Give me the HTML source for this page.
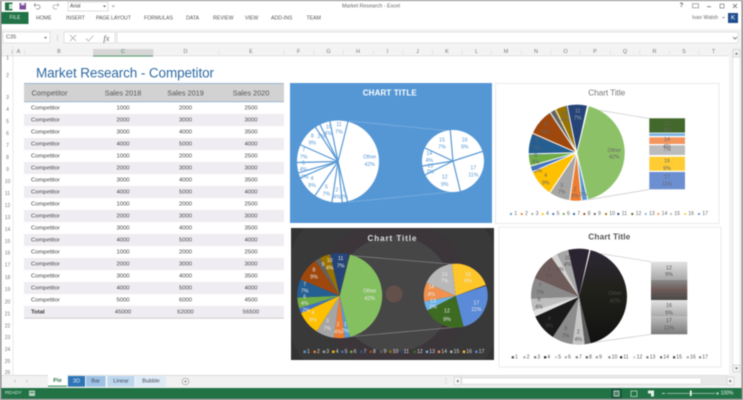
<!DOCTYPE html>
<html><head><meta charset="utf-8"><title>Market Research - Excel</title>
<style>
html,body{margin:0;padding:0;background:#fff;width:743px;height:400px;overflow:hidden}
svg{display:block;filter:blur(.42px)}
text{font-family:"Liberation Sans",sans-serif;dominant-baseline:central}
.m{text-anchor:middle}
.tab{font-size:5.2px;fill:#555}
.hd{font-size:5.5px;fill:#777;text-anchor:middle}
.rn{font-size:5px;fill:#777;text-anchor:middle}
.th{font-size:7.3px;fill:#555;text-anchor:middle}
.td{font-size:5.9px;fill:#444}
.n{text-anchor:middle}
.b text{font-size:5.3px;fill:#5597d5;text-anchor:middle}
.w text{font-size:5.3px;fill:#666;text-anchor:middle}
.d text{font-size:5.3px;fill:#e8e8e8;text-anchor:middle}
.g text{font-size:5.3px;fill:#555;text-anchor:middle}
.lg text{font-size:5.2px}
circle.s{fill:none}
</style></head><body>
<svg width="743" height="400" viewBox="0 0 743 400" xmlns="http://www.w3.org/2000/svg">
<rect width="743" height="400" fill="#fff"/>
<!-- window border -->
<rect x="0" y="0" width="743" height="1" fill="#8a8a8a"/>
<rect x="0" y="0" width="1.5" height="400" fill="#8a8a8a"/>
<rect x="741.5" y="0" width="1.5" height="400" fill="#8a8a8a"/>
<!-- quick access -->
<rect x="5" y="2.5" width="7.5" height="8" fill="#217346"/><rect x="9" y="4" width="3.5" height="5" fill="#cfe3d6"/>
<rect x="19.5" y="3" width="6.5" height="6.5" fill="#7a4f96"/><rect x="21" y="3" width="3.5" height="2.3" fill="#e7dcee"/>
<path d="M34 5h4a2 2 0 0 1 0 4h-2M34 5l1.6-1.6M34 5l1.6 1.6" fill="none" stroke="#8a8a8a" stroke-width=".8"/>
<path d="M59 5h-4a2 2 0 0 0 0 4h2M59 5l-1.6-1.6M59 5l-1.6 1.6" fill="none" stroke="#aaa" stroke-width=".8"/>
<rect x="68" y="2" width="40" height="9" fill="#fff" stroke="#c8c8c8" stroke-width=".6"/>
<text x="70" y="6.5" font-size="5.2" fill="#444">Arial</text>
<path d="M103 5.5h3l-1.5 2z" fill="#666"/>
<path d="M112 5l1.3 2 1.3-2" fill="none" stroke="#888" stroke-width=".6"/>
<text x="371" y="6.7" class="m" font-size="5.3" fill="#666" textLength="58">Market Research - Excel</text>
<!-- window controls -->
<text x="681.5" y="6" class="m" font-size="6" fill="#555" font-weight="bold">?</text>
<rect x="692.5" y="3.8" width="6" height="4" fill="none" stroke="#888" stroke-width=".7"/>
<rect x="707" y="6.3" width="4" height=".8" fill="#666"/>
<rect x="720" y="4" width="4" height="4" fill="none" stroke="#777" stroke-width=".7"/>
<path d="M733 4l4 4M737 4l-4 4" stroke="#666" stroke-width=".8"/>
<!-- ribbon tabs -->
<rect x="1.5" y="12" width="27" height="12" fill="#217346"/>
<text x="15" y="18" class="m" font-size="5.2" fill="#e6f2ea">FILE</text>
<text x="36" y="18.3" class="tab">HOME</text>
<text x="66" y="18.3" class="tab">INSERT</text>
<text x="96" y="18.3" class="tab" textLength="35">PAGE LAYOUT</text>
<text x="144" y="18.3" class="tab" textLength="29">FORMULAS</text>
<text x="186" y="18.3" class="tab">DATA</text>
<text x="213" y="18.3" class="tab">REVIEW</text>
<text x="245" y="18.3" class="tab">VIEW</text>
<text x="271" y="18.3" class="tab">ADD-INS</text>
<text x="306.5" y="18.3" class="tab">TEAM</text>
<text x="692" y="18" font-size="5.2" fill="#666" textLength="26">Ivan Walsh</text>
<path d="M722 17h3l-1.5 1.5z" fill="#888"/>
<rect x="728" y="13" width="10" height="10" fill="#1f4e8c"/>
<text x="733" y="18" class="m" font-size="6.5" fill="#fff">K</text>
<!-- formula bar -->
<rect x="1.5" y="29" width="740" height="17" fill="#f4f4f4"/>
<rect x="3" y="32" width="47" height="11" fill="#fff" stroke="#d8d8d8" stroke-width=".7"/>
<text x="6" y="37.7" font-size="5.6" fill="#555">C35</text>
<path d="M44 37h3l-1.5 1.7z" fill="#666"/>
<circle cx="57.5" cy="36" r=".5" fill="#aaa"/><circle cx="57.5" cy="38" r=".5" fill="#aaa"/><circle cx="57.5" cy="40" r=".5" fill="#aaa"/>
<rect x="64" y="32" width="51" height="11" fill="#fff" stroke="#d8d8d8" stroke-width=".7"/>
<path d="M70 35l6 6M76 35l-6 6" stroke="#bbb" stroke-width=".9"/>
<path d="M86 38.5l2.5 2.5 5-5.5" fill="none" stroke="#bbb" stroke-width=".9"/>
<text x="106.5" y="38" class="m" font-size="8.5" fill="#666" font-style="italic" style="font-family:'Liberation Serif',serif">fx</text>
<rect x="117" y="32" width="621" height="11" fill="#fff" stroke="#d8d8d8" stroke-width=".7"/>
<path d="M734 37l2 2 2-2" fill="none" stroke="#666" stroke-width=".8" transform="translate(-1,0)"/>
<!-- col headers -->
<rect x="1.5" y="46" width="740" height="10" fill="#f3f3f3"/>
<rect x="1.5" y="55.6" width="727" height=".6" fill="#d4d4d4"/>
<rect x="93" y="49" width="60" height="7" fill="#d6d6d6"/>
<rect x="93" y="55.5" width="60" height="1.1" fill="#5c9a76"/>
<path d="M13 49l-2 3 2 3z" fill="#ccc"/>
<g fill="#dcdcdc">
<rect x="24.5" y="50" width=".6" height="5"/><rect x="93" y="50" width=".6" height="5"/><rect x="153" y="50" width=".6" height="5"/><rect x="218.5" y="50" width=".6" height="5"/><rect x="284" y="50" width=".6" height="5"/><rect x="313.5" y="50" width=".6" height="5"/><rect x="343" y="50" width=".6" height="5"/><rect x="373" y="50" width=".6" height="5"/><rect x="402.5" y="50" width=".6" height="5"/><rect x="432" y="50" width=".6" height="5"/><rect x="461.5" y="50" width=".6" height="5"/><rect x="491" y="50" width=".6" height="5"/><rect x="521" y="50" width=".6" height="5"/><rect x="550.5" y="50" width=".6" height="5"/><rect x="580" y="50" width=".6" height="5"/><rect x="610" y="50" width=".6" height="5"/><rect x="639.5" y="50" width=".6" height="5"/><rect x="669" y="50" width=".6" height="5"/><rect x="698.5" y="50" width=".6" height="5"/>
</g>
<text x="18.5" y="52" class="hd">A</text><text x="59" y="52" class="hd">B</text><text x="123" y="52" class="hd" style="fill:#3d8058">C</text><text x="185.5" y="52" class="hd">D</text><text x="251" y="52" class="hd">E</text><text x="298.5" y="52" class="hd">F</text><text x="328.5" y="52" class="hd">G</text><text x="358" y="52" class="hd">H</text><text x="387.5" y="52" class="hd">I</text><text x="417.5" y="52" class="hd">J</text><text x="447" y="52" class="hd">K</text><text x="476.5" y="52" class="hd">L</text><text x="506" y="52" class="hd">M</text><text x="536" y="52" class="hd">N</text><text x="565.5" y="52" class="hd">O</text><text x="595" y="52" class="hd">P</text><text x="625" y="52" class="hd">Q</text><text x="654.5" y="52" class="hd">R</text><text x="684" y="52" class="hd">S</text><text x="713.5" y="52" class="hd">T</text>
<!-- row header -->
<rect x="12.6" y="46" width=".6" height="329" fill="#dcdcdc"/>
<text x="7.5" y="58.5" class="rn">1</text><text x="7.5" y="76" class="rn">2</text><text x="7.5" y="98" class="rn">3</text><text x="7.5" y="110" class="rn">4</text><text x="7.5" y="122" class="rn">5</text><text x="7.5" y="134" class="rn">6</text><text x="7.5" y="146" class="rn">7</text><text x="7.5" y="158" class="rn">8</text><text x="7.5" y="170" class="rn">9</text><text x="7.5" y="182" class="rn">10</text><text x="7.5" y="194" class="rn">11</text><text x="7.5" y="206" class="rn">12</text><text x="7.5" y="218" class="rn">13</text><text x="7.5" y="230" class="rn">14</text><text x="7.5" y="242" class="rn">15</text><text x="7.5" y="253.7" class="rn">16</text><text x="7.5" y="265.7" class="rn">17</text><text x="7.5" y="278" class="rn">18</text><text x="7.5" y="290" class="rn">19</text><text x="7.5" y="302.5" class="rn">20</text><text x="7.5" y="314.5" class="rn">21</text><text x="7.5" y="326.5" class="rn">22</text><text x="7.5" y="338" class="rn">23</text><text x="7.5" y="350" class="rn">24</text><text x="7.5" y="362" class="rn">25</text><text x="7.5" y="373" class="rn">26</text>
<!-- title -->
<text x="36" y="73" font-size="13.5" fill="#2f6aa3" textLength="178">Market Research - Competitor</text>
<!-- table -->
<rect x="24" y="83.3" width="260" height="18.4" fill="#d2d2d2"/>
<rect x="24" y="83" width="260" height=".8" fill="#8fb0d0"/><rect x="24" y="101.4" width="260" height=".8" fill="#8fb0d0"/>
<text x="31.5" y="93" font-size="7.3" fill="#555" textLength="36">Competitor</text>
<text x="123" y="93" class="th">Sales 2018</text><text x="185.5" y="93" class="th">Sales 2019</text><text x="251" y="93" class="th">Sales 2020</text>
<g fill="#f0edf2">
<rect x="24" y="114" width="260" height="12"/><rect x="24" y="138" width="260" height="12"/><rect x="24" y="162" width="260" height="12"/><rect x="24" y="186" width="260" height="12"/><rect x="24" y="210" width="260" height="12"/><rect x="24" y="234" width="260" height="12"/><rect x="24" y="258" width="260" height="12"/><rect x="24" y="282" width="260" height="12"/><rect x="24" y="306" width="260" height="12"/>
</g>
<rect x="24" y="317.8" width="260" height=".8" fill="#c4c4c4"/>
<g class="td" transform="translate(0,.6)">
<text class="td" x="31" y="107.7">Competitor</text><text class="td n" x="123" y="107.7">1000</text><text class="td n" x="185.5" y="107.7">2000</text><text class="td n" x="251" y="107.7">2500</text>
<text class="td" x="31" y="119.7">Competitor</text><text class="td n" x="123" y="119.7">2000</text><text class="td n" x="185.5" y="119.7">3000</text><text class="td n" x="251" y="119.7">3000</text>
<text class="td" x="31" y="131.7">Competitor</text><text class="td n" x="123" y="131.7">3000</text><text class="td n" x="185.5" y="131.7">4000</text><text class="td n" x="251" y="131.7">3500</text>
<text class="td" x="31" y="143.7">Competitor</text><text class="td n" x="123" y="143.7">4000</text><text class="td n" x="185.5" y="143.7">5000</text><text class="td n" x="251" y="143.7">4000</text>
<text class="td" x="31" y="155.7">Competitor</text><text class="td n" x="123" y="155.7">1000</text><text class="td n" x="185.5" y="155.7">2000</text><text class="td n" x="251" y="155.7">2500</text>
<text class="td" x="31" y="167.7">Competitor</text><text class="td n" x="123" y="167.7">2000</text><text class="td n" x="185.5" y="167.7">3000</text><text class="td n" x="251" y="167.7">3000</text>
<text class="td" x="31" y="179.7">Competitor</text><text class="td n" x="123" y="179.7">3000</text><text class="td n" x="185.5" y="179.7">4000</text><text class="td n" x="251" y="179.7">3500</text>
<text class="td" x="31" y="191.7">Competitor</text><text class="td n" x="123" y="191.7">4000</text><text class="td n" x="185.5" y="191.7">5000</text><text class="td n" x="251" y="191.7">4000</text>
<text class="td" x="31" y="203.7">Competitor</text><text class="td n" x="123" y="203.7">1000</text><text class="td n" x="185.5" y="203.7">2000</text><text class="td n" x="251" y="203.7">2500</text>
<text class="td" x="31" y="215.7">Competitor</text><text class="td n" x="123" y="215.7">2000</text><text class="td n" x="185.5" y="215.7">3000</text><text class="td n" x="251" y="215.7">3000</text>
<text class="td" x="31" y="227.7">Competitor</text><text class="td n" x="123" y="227.7">3000</text><text class="td n" x="185.5" y="227.7">4000</text><text class="td n" x="251" y="227.7">3500</text>
<text class="td" x="31" y="239.7">Competitor</text><text class="td n" x="123" y="239.7">4000</text><text class="td n" x="185.5" y="239.7">5000</text><text class="td n" x="251" y="239.7">4000</text>
<text class="td" x="31" y="251.7">Competitor</text><text class="td n" x="123" y="251.7">1000</text><text class="td n" x="185.5" y="251.7">2000</text><text class="td n" x="251" y="251.7">2500</text>
<text class="td" x="31" y="263.7">Competitor</text><text class="td n" x="123" y="263.7">2000</text><text class="td n" x="185.5" y="263.7">3000</text><text class="td n" x="251" y="263.7">3000</text>
<text class="td" x="31" y="275.7">Competitor</text><text class="td n" x="123" y="275.7">3000</text><text class="td n" x="185.5" y="275.7">4000</text><text class="td n" x="251" y="275.7">3500</text>
<text class="td" x="31" y="287.7">Competitor</text><text class="td n" x="123" y="287.7">4000</text><text class="td n" x="185.5" y="287.7">5000</text><text class="td n" x="251" y="287.7">4000</text>
<text class="td" x="31" y="299.7">Competitor</text><text class="td n" x="123" y="299.7">5000</text><text class="td n" x="185.5" y="299.7">6000</text><text class="td n" x="251" y="299.7">4500</text>
<text class="td" x="31" y="311.7" font-weight="bold" style="fill:#333">Total</text><text class="td n" x="123" y="311.7">45000</text><text class="td n" x="185.5" y="311.7">62000</text><text class="td n" x="251" y="311.7">56500</text>
</g>

<!-- CHART 1 blue -->
<rect x="290" y="83" width="202" height="140" fill="#5597d5"/>
<text x="389.7" y="93" class="m" font-size="8" font-weight="bold" fill="#fff" textLength="54">CHART TITLE</text>
<path d="M349 121L451 131M349 202L461 191" stroke="#a9cbea" stroke-width=".6" stroke-dasharray="1.5 1"/>
<circle cx="338" cy="161.5" r="41" fill="#fff"/>
<circle cx="453" cy="161" r="31" fill="#fff"/>
<g stroke="#5597d5" stroke-width="1.2">
<g transform="translate(338,161.5)"><line y2="-41.5" transform="rotate(14)"/><line y2="-41.5" transform="rotate(166.7)"/><line y2="-41.5" transform="rotate(174)"/><line y2="-41.5" transform="rotate(188.5)"/><line y2="-41.5" transform="rotate(214)"/><line y2="-41.5" transform="rotate(246.7)"/><line y2="-41.5" transform="rotate(254)"/><line y2="-41.5" transform="rotate(268.6)"/><line y2="-41.5" transform="rotate(294)"/><line y2="-41.5" transform="rotate(326.7)"/><line y2="-41.5" transform="rotate(334)"/><line y2="-41.5" transform="rotate(348.6)"/></g>
<g transform="translate(453,161)"><line y2="-31.5" transform="rotate(72)"/><line y2="-31.5" transform="rotate(166.3)"/><line y2="-31.5" transform="rotate(243.4)"/><line y2="-31.5" transform="rotate(260.6)"/><line y2="-31.5" transform="rotate(294.9)"/><line y2="-31.5" transform="rotate(354.9)"/></g>
</g>
<g class="b">
<text x="369.7" y="157.7">Other</text><text x="369.7" y="165">42%</text>
<text x="339" y="125">11</text><text x="339" y="132.3">7%</text>
<text x="328.7" y="127.7">10</text><text x="328" y="134">4%</text>
<text x="321.3" y="137">2%</text>
<text x="312.3" y="136.7">8</text><text x="312.3" y="143.3">9%</text>
<text x="303.7" y="150.7">7</text><text x="303.7" y="157.3">7%</text>
<text x="303.3" y="163.3">6</text><text x="303.3" y="170">4%</text>
<text x="304.7" y="177.3">2%</text>
<text x="312" y="179">4</text><text x="312" y="186">9%</text>
<text x="326.3" y="187.7">5</text><text x="326.3" y="194.3">7%</text>
<text x="337" y="190.7">2</text><text x="337" y="197.3">4%</text>
<text x="344" y="190">1</text><text x="344" y="197.3">2%</text>
<text x="464.7" y="140.7">16</text><text x="464.7" y="147.3">9%</text>
<text x="442" y="140.7">15</text><text x="442" y="147.3">7%</text>
<text x="429.3" y="154">14</text><text x="429.3" y="161">4%</text>
<text x="430.3" y="166.7">13</text><text x="430.3" y="172.7">2%</text>
<text x="444.7" y="177.7">12</text><text x="444.7" y="185">9%</text>
<text x="473.3" y="168.3">17</text><text x="473.3" y="175.7">11%</text>
</g>

<!-- CHART 2 white -->
<rect x="495.5" y="83.5" width="223.5" height="140" fill="#fff" stroke="#e6e6e6" stroke-width=".8"/>
<text x="606.7" y="92.7" class="m" font-size="8.3" fill="#777" textLength="37">Chart Title</text>
<path d="M588.5 108.5L649.3 118.5M587 200L649.3 189.5" stroke="#c8c8c8" stroke-width=".7"/>
<g transform="translate(576.7,152.7) rotate(-76)" stroke-width="48">
<circle class="s" r="24" pathLength="99" stroke="#8cc168" stroke-dasharray="42 99" stroke-dashoffset="0"/>
<circle class="s" r="24" pathLength="99" stroke="#5b9bd5" stroke-dasharray="2 99" stroke-dashoffset="-42"/>
<circle class="s" r="24" pathLength="99" stroke="#ed7d31" stroke-dasharray="4 99" stroke-dashoffset="-44"/>
<circle class="s" r="24" pathLength="99" stroke="#a5a5a5" stroke-dasharray="7 99" stroke-dashoffset="-48"/>
<circle class="s" r="24" pathLength="99" stroke="#ffc000" stroke-dasharray="9 99" stroke-dashoffset="-55"/>
<circle class="s" r="24" pathLength="99" stroke="#4472c4" stroke-dasharray="2 99" stroke-dashoffset="-64"/>
<circle class="s" r="24" pathLength="99" stroke="#70ad47" stroke-dasharray="4 99" stroke-dashoffset="-66"/>
<circle class="s" r="24" pathLength="99" stroke="#255e91" stroke-dasharray="7 99" stroke-dashoffset="-70"/>
<circle class="s" r="24" pathLength="99" stroke="#9e480e" stroke-dasharray="9 99" stroke-dashoffset="-77"/>
<circle class="s" r="24" pathLength="99" stroke="#636363" stroke-dasharray="2 99" stroke-dashoffset="-86"/>
<circle class="s" r="24" pathLength="99" stroke="#997300" stroke-dasharray="4 99" stroke-dashoffset="-88"/>
<circle class="s" r="24" pathLength="99" stroke="#264478" stroke-dasharray="7 99" stroke-dashoffset="-92"/>
</g>
<g stroke="#fff" stroke-width="1" transform="translate(576.7,152.7)"><line y2="-49" transform="rotate(14)"/><line y2="-49" transform="rotate(166.7)"/><line y2="-49" transform="rotate(174)"/><line y2="-49" transform="rotate(188.5)"/><line y2="-49" transform="rotate(214)"/><line y2="-49" transform="rotate(246.7)"/><line y2="-49" transform="rotate(254)"/><line y2="-49" transform="rotate(268.6)"/><line y2="-49" transform="rotate(294)"/><line y2="-49" transform="rotate(326.7)"/><line y2="-49" transform="rotate(334)"/><line y2="-49" transform="rotate(348.6)"/></g>
<rect x="649.3" y="118.3" width="35.7" height="14.3" fill="#43682b"/>
<rect x="649.3" y="133.3" width="35.7" height="2.7" fill="#7cb3e4"/>
<rect x="649.3" y="137.3" width="35.7" height="6.7" fill="#f4955e"/>
<rect x="649.3" y="145.3" width="35.7" height="9.7" fill="#bbb"/>
<rect x="649.3" y="156.7" width="35.7" height="14" fill="#ffcd33"/>
<rect x="649.3" y="172" width="35.7" height="17.3" fill="#6c8fd2"/>
<g class="w">
<text x="614.3" y="151">Other</text><text x="614.3" y="157.7">42%</text>
<text x="577.7" y="111.7" style="fill:#9aa">11</text><text x="577.7" y="118.7" style="fill:#9aa">7%</text>
<text x="564.3" y="114.3">10</text><text x="564.3" y="120.7">4%</text>
<text x="545.7" y="125">8</text><text x="545.7" y="132.3">9%</text>
<text x="536.7" y="141.7">7</text><text x="536.7" y="148.3">7%</text>
<text x="535.7" y="156">6</text><text x="535.7" y="162.7">4%</text>
<text x="538.3" y="171.7">2%</text>
<text x="545.7" y="176">4</text><text x="545.7" y="183.3">9%</text>
<text x="561.7" y="186">3</text><text x="561.7" y="192.7">7%</text>
<text x="575" y="190">2</text><text x="575" y="196.7">4%</text>
<text x="583.3" y="189.3">1</text><text x="583.3" y="195">2%</text>
<text x="667" y="124">12</text><text x="667" y="130.7">9%</text>
<text x="667" y="140">14</text><text x="667" y="147">4%</text>
<text x="667" y="150">7%</text>
<text x="667" y="161.7">16</text><text x="667" y="169">9%</text>
<text x="667" y="177.3">17</text><text x="667" y="184.3">11%</text>
</g>
<g class="lg" fill="#666">
<circle cx="511" cy="214" r="1.1" fill="#5b9bd5"/><text x="514.3" y="214">1</text>
<circle cx="521.7" cy="214" r="1.1" fill="#ed7d31"/><text x="525" y="214">2</text>
<circle cx="532.3" cy="214" r="1.1" fill="#a5a5a5"/><text x="535.6" y="214">3</text>
<circle cx="542.7" cy="214" r="1.1" fill="#ffc000"/><text x="546" y="214">4</text>
<circle cx="553.3" cy="214" r="1.1" fill="#4472c4"/><text x="556.6" y="214">5</text>
<circle cx="563.7" cy="214" r="1.1" fill="#70ad47"/><text x="567" y="214">6</text>
<circle cx="574" cy="214" r="1.1" fill="#255e91"/><text x="577.3" y="214">7</text>
<circle cx="584.3" cy="214" r="1.1" fill="#9e480e"/><text x="587.6" y="214">8</text>
<circle cx="594.7" cy="214" r="1.1" fill="#636363"/><text x="598" y="214">9</text>
<circle cx="606" cy="214" r="1.1" fill="#997300"/><text x="609.3" y="214">10</text>
<circle cx="618.3" cy="214" r="1.1" fill="#264478"/><text x="621.6" y="214">11</text>
<circle cx="632.3" cy="214" r="1.1" fill="#43682b"/><text x="635.6" y="214">12</text>
<circle cx="645.7" cy="214" r="1.1" fill="#7cb3e4"/><text x="649" y="214">13</text>
<circle cx="658.3" cy="214" r="1.1" fill="#f4955e"/><text x="661.6" y="214">14</text>
<circle cx="671" cy="214" r="1.1" fill="#bbb"/><text x="674.3" y="214">15</text>
<circle cx="685" cy="214" r="1.1" fill="#ffcd33"/><text x="688.3" y="214">16</text>
<circle cx="699" cy="214" r="1.1" fill="#6c8fd2"/><text x="702.3" y="214">17</text>
</g>

<!-- CHART 3 dark -->
<clipPath id="c3"><rect x="291" y="228" width="203" height="132"/></clipPath>
<rect x="291" y="228" width="203" height="132" fill="#333"/>
<g clip-path="url(#c3)">
<circle cx="394" cy="294" r="112" fill="#393939"/>
<circle cx="394" cy="294" r="76" fill="#3c363b"/>
<circle cx="394" cy="294" r="58" fill="#464646"/>
<circle cx="394" cy="294" r="8.5" fill="#64504a"/>
</g>
<text x="392" y="238.3" class="m" font-size="8" font-weight="bold" fill="#ddd" textLength="49">Chart Title</text>
<path d="M351.3 255.7L453.7 264.3M349.7 336.7L461.3 326.7" stroke="#8a8a8a" stroke-width=".7"/>
<g transform="translate(339.7,295.7) rotate(-76)" stroke-width="42.5">
<circle class="s" r="21.25" pathLength="99" stroke="#84c060" stroke-dasharray="42 99" stroke-dashoffset="0"/>
<circle class="s" r="21.25" pathLength="99" stroke="#5b9bd5" stroke-dasharray="2 99" stroke-dashoffset="-42"/>
<circle class="s" r="21.25" pathLength="99" stroke="#ed7d31" stroke-dasharray="4 99" stroke-dashoffset="-44"/>
<circle class="s" r="21.25" pathLength="99" stroke="#a5a5a5" stroke-dasharray="7 99" stroke-dashoffset="-48"/>
<circle class="s" r="21.25" pathLength="99" stroke="#ffc000" stroke-dasharray="9 99" stroke-dashoffset="-55"/>
<circle class="s" r="21.25" pathLength="99" stroke="#4472c4" stroke-dasharray="2 99" stroke-dashoffset="-64"/>
<circle class="s" r="21.25" pathLength="99" stroke="#70ad47" stroke-dasharray="4 99" stroke-dashoffset="-66"/>
<circle class="s" r="21.25" pathLength="99" stroke="#255e91" stroke-dasharray="7 99" stroke-dashoffset="-70"/>
<circle class="s" r="21.25" pathLength="99" stroke="#9e480e" stroke-dasharray="9 99" stroke-dashoffset="-77"/>
<circle class="s" r="21.25" pathLength="99" stroke="#636363" stroke-dasharray="2 99" stroke-dashoffset="-86"/>
<circle class="s" r="21.25" pathLength="99" stroke="#997300" stroke-dasharray="4 99" stroke-dashoffset="-88"/>
<circle class="s" r="21.25" pathLength="99" stroke="#264478" stroke-dasharray="7 99" stroke-dashoffset="-92"/>
</g>
<g transform="translate(455.7,295.7) rotate(-18)" stroke-width="32">
<circle class="s" r="16" pathLength="42" stroke="#5b8ad8" stroke-dasharray="11 42" stroke-dashoffset="0"/>
<circle class="s" r="16" pathLength="42" stroke="#3d6b22" stroke-dasharray="9 42" stroke-dashoffset="-11"/>
<circle class="s" r="16" pathLength="42" stroke="#6db3e8" stroke-dasharray="2 42" stroke-dashoffset="-20"/>
<circle class="s" r="16" pathLength="42" stroke="#f0914f" stroke-dasharray="4 42" stroke-dashoffset="-22"/>
<circle class="s" r="16" pathLength="42" stroke="#b8b8b8" stroke-dasharray="7 42" stroke-dashoffset="-26"/>
<circle class="s" r="16" pathLength="42" stroke="#ffc62a" stroke-dasharray="9 42" stroke-dashoffset="-33"/>
</g>
<g class="d">
<text x="369.7" y="291.7">Other</text><text x="369.7" y="299">42%</text>
<text x="340.7" y="259">11</text><text x="340.7" y="266.3">7%</text>
<text x="329.7" y="261">10</text><text x="329.7" y="268.3">4%</text>
<text x="323" y="265">9</text>
<text x="314" y="270.7">8</text><text x="314" y="277.3">9%</text>
<text x="304.7" y="285">7</text><text x="304.7" y="291.7">7%</text>
<text x="304.7" y="297.3">6</text><text x="304.7" y="304">4%</text>
<text x="306.3" y="311">2%</text>
<text x="313" y="313.3">4</text><text x="313" y="320.7">9%</text>
<text x="327.3" y="321.7">3</text><text x="327.3" y="329">7%</text>
<text x="338" y="325">2</text><text x="338" y="332.3">4%</text>
<text x="345.3" y="325">1</text><text x="345.3" y="331.7">2%</text>
<text x="468" y="275">16</text><text x="468" y="281.7">9%</text>
<text x="476.3" y="303.3">17</text><text x="476.3" y="310">11%</text>
<text x="447" y="311.7">12</text><text x="447" y="320">9%</text>
<text x="433" y="301.7">13</text><text x="433" y="307.7">2%</text>
<text x="431.3" y="287.7">14</text><text x="431.3" y="295">4%</text>
<text x="444.7" y="275">15</text><text x="444.7" y="281.7">7%</text>
</g>
<g class="lg" fill="#ddd">
<rect x="303.5" y="350.6" width="2.4" height="2.4" fill="#5b9bd5"/><text x="307" y="351.8">1</text>
<rect x="313.5" y="350.6" width="2.4" height="2.4" fill="#ed7d31"/><text x="317" y="351.8">2</text>
<rect x="322.8" y="350.6" width="2.4" height="2.4" fill="#a5a5a5"/><text x="326.3" y="351.8">3</text>
<rect x="332.1" y="350.6" width="2.4" height="2.4" fill="#ffc000"/><text x="335.6" y="351.8">4</text>
<rect x="341.1" y="350.6" width="2.4" height="2.4" fill="#4472c4"/><text x="344.6" y="351.8">5</text>
<rect x="350.1" y="350.6" width="2.4" height="2.4" fill="#70ad47"/><text x="353.6" y="351.8">6</text>
<rect x="360.1" y="350.6" width="2.4" height="2.4" fill="#255e91"/><text x="363.6" y="351.8">7</text>
<rect x="369.5" y="350.6" width="2.4" height="2.4" fill="#9e480e"/><text x="373" y="351.8">8</text>
<rect x="380.1" y="350.6" width="2.4" height="2.4" fill="#636363"/><text x="383.6" y="351.8">9</text>
<rect x="389.1" y="350.6" width="2.4" height="2.4" fill="#997300"/><text x="392.6" y="351.8">10</text>
<rect x="400.1" y="350.6" width="2.4" height="2.4" fill="#264478"/><text x="403.6" y="351.8">11</text>
<rect x="413.5" y="350.6" width="2.4" height="2.4" fill="#3d6b22"/><text x="417" y="351.8">12</text>
<rect x="425.8" y="350.6" width="2.4" height="2.4" fill="#6db3e8"/><text x="429.3" y="351.8">13</text>
<rect x="437.8" y="350.6" width="2.4" height="2.4" fill="#f0914f"/><text x="441.3" y="351.8">14</text>
<rect x="450.1" y="350.6" width="2.4" height="2.4" fill="#b8b8b8"/><text x="453.6" y="351.8">15</text>
<rect x="462.8" y="350.6" width="2.4" height="2.4" fill="#ffc62a"/><text x="466.3" y="351.8">16</text>
<rect x="475.1" y="350.6" width="2.4" height="2.4" fill="#5b8ad8"/><text x="478.6" y="351.8">17</text>
</g>

<!-- CHART 4 gray -->
<rect x="499" y="227" width="222" height="140" fill="#fff" stroke="#e8e8e8" stroke-width=".8"/>
<text x="609.3" y="236.7" class="m" font-size="8.3" font-weight="bold" fill="#555" textLength="42">Chart Title</text>
<defs>
<linearGradient id="g1" x1="0" y1="0" x2="0" y2="1"><stop offset="0" stop-color="#e2e2e2"/><stop offset="1" stop-color="#a8a8a8"/></linearGradient>
<linearGradient id="g2" x1="0" y1="0" x2="0" y2="1"><stop offset="0" stop-color="#8a8a8a"/><stop offset=".5" stop-color="#6d5a58"/><stop offset="1" stop-color="#4a4a4a"/></linearGradient>
<linearGradient id="g3" x1="0" y1="0" x2="0" y2="1"><stop offset="0" stop-color="#e4e4e4"/><stop offset="1" stop-color="#a8a8a8"/></linearGradient>
<linearGradient id="g4" x1="0" y1="0" x2="0" y2="1"><stop offset="0" stop-color="#bcbcbc"/><stop offset="1" stop-color="#7a7a7a"/></linearGradient>
<linearGradient id="g5" gradientUnits="userSpaceOnUse" x1="46.6" y1="-11.6" x2="-46.6" y2="11.6"><stop offset="0" stop-color="#2e2838"/><stop offset=".4" stop-color="#22221c"/><stop offset="1" stop-color="#111"/></linearGradient>
</defs>
<path d="M590 252L651 261.7M590 343L651 334.3" stroke="#c8c8c8" stroke-width=".7"/>
<g transform="translate(579,296.7) rotate(-76)" stroke-width="48">
<circle class="s" r="24" pathLength="99" stroke="url(#g5)" stroke-dasharray="42 99" stroke-dashoffset="0"/>
<circle class="s" r="24" pathLength="99" stroke="#5c5c5c" stroke-dasharray="2 99" stroke-dashoffset="-42"/>
<circle class="s" r="24" pathLength="99" stroke="#c6c6c6" stroke-dasharray="4 99" stroke-dashoffset="-44"/>
<circle class="s" r="24" pathLength="99" stroke="#8c8c8c" stroke-dasharray="7 99" stroke-dashoffset="-48"/>
<circle class="s" r="24" pathLength="99" stroke="#1a1a1a" stroke-dasharray="9 99" stroke-dashoffset="-55"/>
<circle class="s" r="24" pathLength="99" stroke="#e2e2e2" stroke-dasharray="2 99" stroke-dashoffset="-64"/>
<circle class="s" r="24" pathLength="99" stroke="#bebebe" stroke-dasharray="4 99" stroke-dashoffset="-66"/>
<circle class="s" r="24" pathLength="99" stroke="#8a8a8a" stroke-dasharray="7 99" stroke-dashoffset="-70"/>
<circle class="s" r="24" pathLength="99" stroke="#6e5c5a" stroke-dasharray="9 99" stroke-dashoffset="-77"/>
<circle class="s" r="24" pathLength="99" stroke="#d4d4d4" stroke-dasharray="2 99" stroke-dashoffset="-86"/>
<circle class="s" r="24" pathLength="99" stroke="#a6a6a6" stroke-dasharray="4 99" stroke-dashoffset="-88"/>
<circle class="s" r="24" pathLength="99" stroke="#2a2430" stroke-dasharray="7 99" stroke-dashoffset="-92"/>
</g>
<rect x="651" y="261.7" width="36.3" height="18.3" fill="url(#g1)"/>
<rect x="651" y="280" width="36.3" height="20" fill="url(#g2)"/>
<rect x="651" y="300" width="36.3" height="16.7" fill="url(#g3)"/>
<rect x="651" y="316.7" width="36.3" height="17.6" fill="url(#g4)"/>
<g class="g">
<text x="615" y="294" style="fill:#4a4a4a">Other</text><text x="615" y="301.3" style="fill:#4a4a4a">42%</text>
<text x="669" y="268.3">12</text><text x="669" y="275">9%</text>
<text x="669" y="306">16</text><text x="669" y="313.3">9%</text>
<text x="669" y="321">17</text><text x="669" y="328.3">11%</text>
<text x="578.3" y="332.7">2</text><text x="578.3" y="340">4%</text>
<text x="565.7" y="329">3</text><text x="565.7" y="336.3">7%</text>
<text x="549.3" y="319" style="fill:#444">4</text><text x="549.3" y="326.3" style="fill:#444">9%</text>
<text x="539" y="300">6</text><text x="539" y="307.3">4%</text>
<text x="540" y="286">7</text><text x="540" y="293">7%</text>
<text x="549.3" y="269.3">8</text><text x="549.3" y="276.7">9%</text>
<text x="560" y="270">2%</text>
<text x="567.7" y="258.3">10</text><text x="567.7" y="265">4%</text>
</g>
<g class="lg" fill="#555">
<rect x="511.7" y="356.2" width="2.2" height="2.2" fill="#444"/><text x="515" y="357.3">1</text>
<rect x="523.3" y="356.2" width="2.2" height="2.2" fill="#aaa"/><text x="526.6" y="357.3">2</text>
<rect x="534" y="356.2" width="2.2" height="2.2" fill="#777"/><text x="537.3" y="357.3">3</text>
<rect x="544" y="356.2" width="2.2" height="2.2" fill="#222"/><text x="547.3" y="357.3">4</text>
<rect x="555" y="356.2" width="2.2" height="2.2" fill="#ccc"/><text x="558.3" y="357.3">5</text>
<rect x="564.7" y="356.2" width="2.2" height="2.2" fill="#aaa"/><text x="568" y="357.3">6</text>
<rect x="575.7" y="356.2" width="2.2" height="2.2" fill="#777"/><text x="579" y="357.3">7</text>
<rect x="585.7" y="356.2" width="2.2" height="2.2" fill="#555"/><text x="589" y="357.3">8</text>
<rect x="595.7" y="356.2" width="2.2" height="2.2" fill="#999"/><text x="599" y="357.3">9</text>
<rect x="608.3" y="356.2" width="2.2" height="2.2" fill="#888"/><text x="611.6" y="357.3">10</text>
<rect x="620" y="356.2" width="2.2" height="2.2" fill="#222"/><text x="623.3" y="357.3">11</text>
<rect x="633.3" y="356.2" width="2.2" height="2.2" fill="#ccc"/><text x="636.6" y="357.3">12</text>
<rect x="646.3" y="356.2" width="2.2" height="2.2" fill="#777"/><text x="649.6" y="357.3">13</text>
<rect x="660" y="356.2" width="2.2" height="2.2" fill="#666"/><text x="663.3" y="357.3">14</text>
<rect x="673" y="356.2" width="2.2" height="2.2" fill="#444"/><text x="676.3" y="357.3">15</text>
<rect x="686.7" y="356.2" width="2.2" height="2.2" fill="#aaa"/><text x="690" y="357.3">16</text>
<rect x="699" y="356.2" width="2.2" height="2.2" fill="#888"/><text x="702.3" y="357.3">17</text>
</g>

<!-- vertical scrollbar -->
<rect x="729" y="46" width="12.5" height="329" fill="#f3f3f3"/>
<rect x="733" y="49" width="7" height="323" fill="#fff" stroke="#dcdcdc" stroke-width=".6"/>
<rect x="733" y="50" width="7" height="7" fill="#f3f3f3" stroke="#c8c8c8" stroke-width=".6"/>
<path d="M735 54.5h3l-1.5-2z" fill="#666"/>
<rect x="733" y="365" width="7" height="7" fill="#f3f3f3" stroke="#c8c8c8" stroke-width=".6"/>
<path d="M735 367.5h3l-1.5 2z" fill="#666"/>
<!-- sheet tabs -->
<rect x="1.5" y="375" width="740" height="13" fill="#f1f1f1"/>
<rect x="1.5" y="375" width="727" height=".6" fill="#d0d0d0"/>
<path d="M15.5 379.5l-1.5 1.5 1.5 1.5z" fill="#bbb"/><path d="M26.5 379.5l1.5 1.5-1.5 1.5z" fill="#bbb"/>
<rect x="48" y="375" width="19" height="11.7" fill="#fff"/>
<rect x="48" y="385.6" width="19" height="1.1" fill="#3f8a60"/>
<text x="57.5" y="381" class="m" font-size="5.8" font-weight="bold" fill="#35794f">Pie</text>
<rect x="68" y="376" width="17" height="10.7" fill="#2e75b6"/>
<text x="76.5" y="381.3" class="m" font-size="5.6" fill="#e8f0fa">3D</text>
<rect x="86" y="376" width="19.5" height="10.7" fill="#9cc3e6"/>
<text x="95.7" y="381.3" class="m" font-size="5.6" fill="#445">Bar</text>
<rect x="107.5" y="376" width="27" height="10.7" fill="#bdd7ee"/>
<text x="121" y="381.3" class="m" font-size="5.6" fill="#445">Linear</text>
<rect x="136" y="376" width="30" height="10.7" fill="#deebf7"/>
<text x="151" y="381.3" class="m" font-size="5.6" fill="#445">Bubble</text>
<circle cx="185.5" cy="381.5" r="3.3" fill="#fff" stroke="#999" stroke-width=".7"/>
<path d="M183.7 381.5h3.6M185.5 379.7v3.6" stroke="#666" stroke-width=".6"/>
<circle cx="446" cy="378.5" r=".45" fill="#aaa"/><circle cx="446" cy="381" r=".45" fill="#aaa"/><circle cx="446" cy="383.5" r=".45" fill="#aaa"/>
<!-- h scrollbar -->
<rect x="454" y="377" width="280" height="8" fill="#e8e8e8" stroke="#dcdcdc" stroke-width=".5"/>
<rect x="454" y="377" width="7" height="8" fill="#f5f5f5" stroke="#c8c8c8" stroke-width=".5"/>
<path d="M458.5 379.7v2.8l-2-1.4z" fill="#555"/>
<rect x="462" y="378" width="239" height="6" fill="#fff" stroke="#d8d8d8" stroke-width=".5"/>
<rect x="727" y="377" width="7" height="8" fill="#f5f5f5" stroke="#c8c8c8" stroke-width=".5"/>
<path d="M729.5 379.7v2.8l2-1.4z" fill="#555"/>
<!-- status bar -->
<rect x="1.5" y="388" width="740" height="10.5" fill="#217346"/>
<rect x="0" y="398.5" width="743" height="1.5" fill="#7d8a82"/>
<text x="5" y="393.5" font-size="4.8" fill="#dbe9e0">READY</text>
<rect x="29" y="390.5" width="6" height="5.5" fill="#cfe0d6" opacity=".85"/><rect x="30" y="392" width="4" height=".8" fill="#217346"/>
<rect x="611" y="388.5" width="11" height="10" fill="#18593a"/>
<rect x="614" y="391" width="5" height="5" fill="none" stroke="#dbe9e0" stroke-width=".8"/><path d="M615.7 391v5M617.4 391v5" stroke="#dbe9e0" stroke-width=".5"/>
<rect x="631" y="391" width="6" height="5.5" fill="none" stroke="#cfe0d6" stroke-width=".7"/>
<rect x="648" y="390.5" width="6" height="6" fill="#e5efe9"/><rect x="648" y="393.5" width="3" height="3" fill="#217346"/>
<rect x="662" y="393" width="3" height=".8" fill="#dbe9e0"/>
<rect x="667" y="393" width="48" height=".8" fill="#a4c4b1"/>
<rect x="690" y="390.5" width="1.6" height="5.6" fill="#fff"/>
<path d="M716 393.4h3M717.5 392v3" stroke="#dbe9e0" stroke-width=".7"/>
<text x="727" y="393.5" class="m" font-size="5" fill="#e8f1ec">100%</text>
</svg>
</body></html>
